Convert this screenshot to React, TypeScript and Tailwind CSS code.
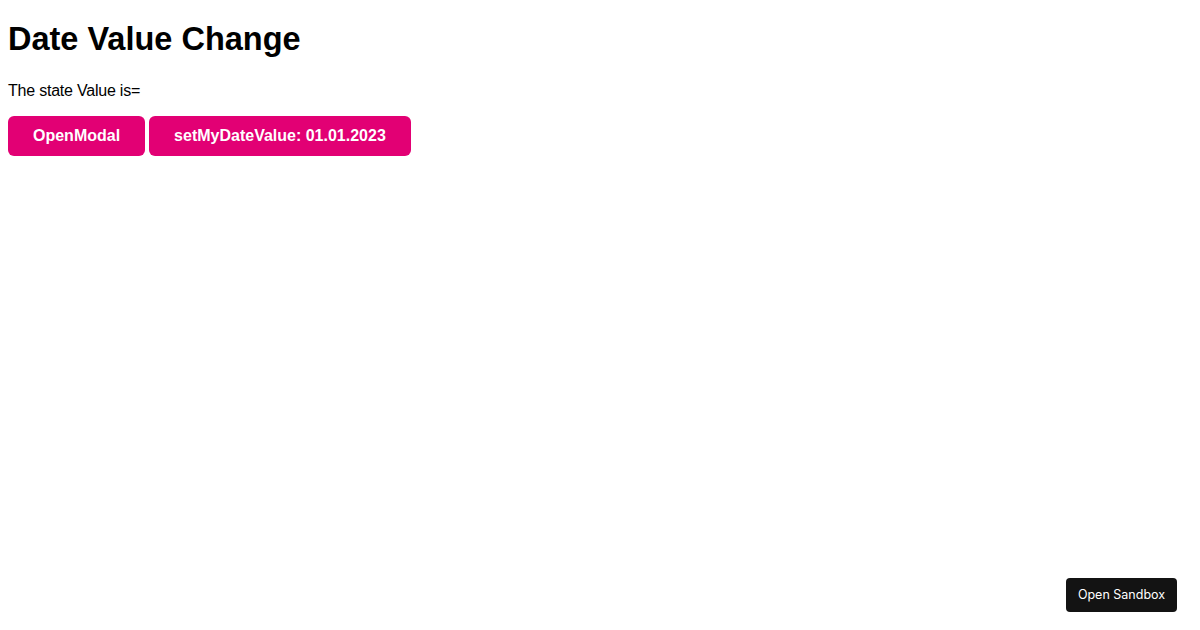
import React from "react";

const font = { fontFamily: '"Liberation Sans", Arial, sans-serif' };

export default function App() {
  return (
    <div className="relative w-[1200px] h-[630px] bg-white text-black overflow-hidden" style={font}>
      <div className="px-2 pt-[21px]">
        <h1 className="text-[32.5px] leading-[37px] font-bold">Date Value Change</h1>
        <p className="mt-[24px] text-base leading-[18px] tracking-[-0.22px]">The state Value is=</p>
        <div className="mt-[16px] flex gap-1">
          <button className="h-10 px-[25px] rounded-md bg-[#e20074] text-white font-bold text-base">
            OpenModal
          </button>
          <button className="h-10 px-[25px] rounded-md bg-[#e20074] text-white font-bold text-base">
            setMyDateValue: 01.01.2023
          </button>
        </div>
      </div>

      {/* floating sandbox link */}
      <button
        className="absolute right-[23px] bottom-[18px] h-[34px] w-[111px] rounded bg-[#131313] text-white text-[12.5px]"
        style={{ fontFamily: "Inter, 'Noto Sans', sans-serif" }}
      >
        Open Sandbox
      </button>
    </div>
  );
}
